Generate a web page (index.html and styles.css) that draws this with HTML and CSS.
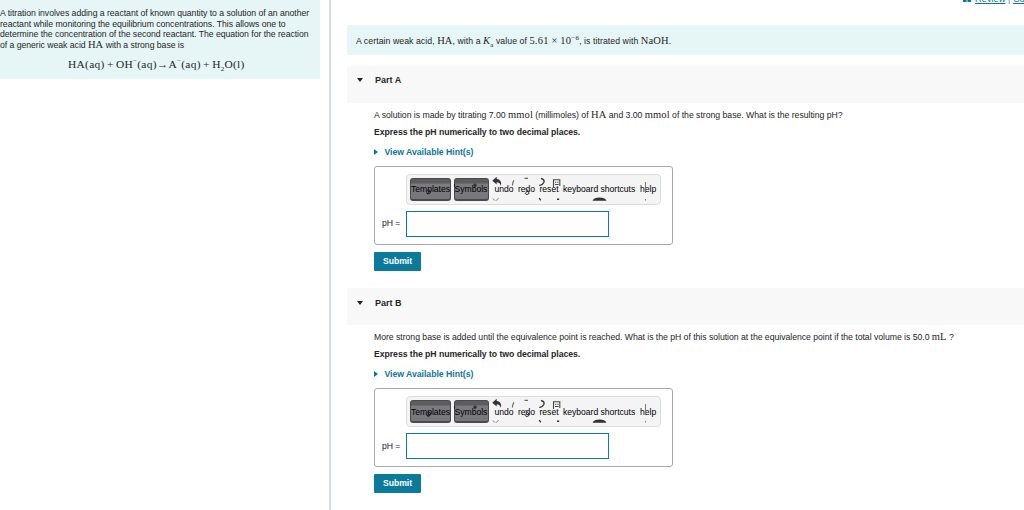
FILE: index.html
```html
<!DOCTYPE html>
<html lang="en">
<head>
    <meta charset="UTF-8">
    <meta name="viewport" content="width=device-width, initial-scale=1.0">
    <title>Acid Titration</title>
    <link rel="stylesheet" href="styles.css">
</head>
<body>
    <!-- toolbar icons, shared by both answer boxes -->
    <svg class="sprite" xmlns="http://www.w3.org/2000/svg">
        <symbol id="toolbar-icons" viewBox="0 0 254 31">
            <path d="M86.3 6.8 L90.7 2.8 V5 Q96 5.3 95 12 Q94 8.5 90.7 8.3 V10.6 Z" fill="#333"/>
            <path d="M108 6.3 Q106.4 8 106.4 11.5 M118.5 4.3 h3.5" fill="none" stroke="#666" stroke-width="1.2"/>
            <path d="M135 4.5 Q139 5.5 137.8 8.5 Q136 11.8 133.3 11.3" fill="none" stroke="#333" stroke-width="1.4"/>
            <path d="M147.5 13 V5.8 H153.8 V12 M149 8.2 h1.3 M151.3 8.2 h1.3 M149 10.5 h3.6" fill="none" stroke="#444" stroke-width="1.1"/>
            <path d="M87 24.5 l1.7 2 M90 26.7 l2.5 -2.5" fill="none" stroke="#777" stroke-width="1"/>
            <path d="M133.3 24 l1.4 2.4 M151 25.3 h2.2" fill="none" stroke="#333" stroke-width="1.4"/>
            <path d="M186.5 26.7 Q188 23.4 193.5 23.4 Q199 23.4 200.5 26.7 Z" fill="#333"/>
            <path d="M239.5 8 V19 M239.5 25 v1.5" fill="none" stroke="#777" stroke-width="1"/>
            <path d="M21 16.5 Q24.8 15.5 24.5 18.3 Q22 21.3 20.5 18.5 M48.5 10 v2.5" fill="none" stroke="#222" stroke-width="1.1"/>
            <circle cx="69" cy="11.3" r="1.7" fill="#333"/>
            <path d="M119.5 14 l3.5 4 M121 17.5 q-3.5 2.5 0 3 q3.2 -.5 1.5 -3" fill="none" stroke="#333" stroke-width="1"/>
        </symbol>
    </svg>

    <div class="page">
        <aside class="sidebar">
            <div class="intro">
                <p class="line">A titration involves adding a reactant of known quantity to a solution of an another</p>
                <p class="line">reactant while monitoring the equilibrium concentrations. This allows one to</p>
                <p class="line">determine the concentration of the second reactant. The equation for the reaction</p>
                <p class="line">of a generic weak acid <span class="math">HA</span> with a strong base is</p>
                <p class="equation">HA(aq)<span class="op">+</span>OH<sup>−</sup>(aq)<span class="arrow">→</span>A<sup>−</sup>(aq)<span class="op">+</span>H<sub>2</sub>O(l)</p>
            </div>
        </aside>

        <main class="content">
            <div class="top-links">
                <svg class="book" width="8" height="8" viewBox="0 0 8 8"><path d="M0 0h3.6v8H0zM4.4 0H8v8H4.4z" fill="#0b7796"/></svg>
                <a href="#">Review</a><span>|</span><a href="#">Constants</a>
            </div>

            <div class="problem">A certain weak acid, <span class="math">HA</span>, with a <span class="math"><i>K</i><sub>a</sub></span> value of <span class="math number">5.61 × 10<sup>−6</sup></span>, is titrated with <span class="math">NaOH</span>.</div>

            <section class="part part-a">
                <div class="part-header"><span class="caret"></span><h2>Part A</h2></div>
                <div class="part-body">
                    <p class="question question-a">A solution is made by titrating 7.00 <span class="math">mmol</span> (millimoles) of <span class="math">HA</span> and 3.00 <span class="math">mmol</span> of the strong base. What is the resulting pH?</p>
                    <p class="instruction">Express the pH numerically to two decimal places.</p>
                    <a class="hints" href="#"><span class="hint-arrow"></span>View Available Hint(s)</a>
                    <div class="answer">
                        <div class="toolbar">
                            <span class="tool dark templates">Templates</span>
                            <span class="tool dark symbols">Symbols</span>
                            <span class="tool undo">undo</span>
                            <span class="tool redo">redo</span>
                            <span class="tool reset">reset</span>
                            <span class="tool keyboard">keyboard shortcuts</span>
                            <span class="tool help">help</span>
                            <svg class="icons"><use href="#toolbar-icons"/></svg>
                        </div>
                        <div class="field"><label for="ph-a">pH =</label><input id="ph-a" type="text"></div>
                    </div>
                    <button class="submit">Submit</button>
                </div>
            </section>

            <section class="part part-b">
                <div class="part-header"><span class="caret"></span><h2>Part B</h2></div>
                <div class="part-body">
                    <p class="question question-b">More strong base is added until the equivalence point is reached. What is the pH of this solution at the equivalence point if the total volume is 50.0 <span class="math">mL</span> ?</p>
                    <p class="instruction">Express the pH numerically to two decimal places.</p>
                    <a class="hints" href="#"><span class="hint-arrow"></span>View Available Hint(s)</a>
                    <div class="answer">
                        <div class="toolbar">
                            <span class="tool dark templates">Templates</span>
                            <span class="tool dark symbols">Symbols</span>
                            <span class="tool undo">undo</span>
                            <span class="tool redo">redo</span>
                            <span class="tool reset">reset</span>
                            <span class="tool keyboard">keyboard shortcuts</span>
                            <span class="tool help">help</span>
                            <svg class="icons"><use href="#toolbar-icons"/></svg>
                        </div>
                        <div class="field"><label for="ph-b">pH =</label><input id="ph-b" type="text"></div>
                    </div>
                    <button class="submit">Submit</button>
                </div>
            </section>
        </main>
    </div>
</body>
</html>
```
FILE: styles.css
```css
* {
    box-sizing: border-box;
}

body {
    margin: 0;
    height: 510px;
    overflow: hidden;
    background-color: #fff;
    color: #252525;
    font-family: "Liberation Sans", Arial, sans-serif;
    font-size: 8.7px;
    white-space: nowrap;
}

p, h2 {
    margin: 0;
}

.sprite {
    display: none;
}

.page {
    display: flex;
    height: 510px;
}

.sidebar {
    width: 331px;
    flex: none;
    border-right: 2px solid #d5dbe6;
}

.intro {
    width: 320px;
    height: 79px;
    padding-top: 8px;
    background-color: #e6f6f6;
}

.line {
    height: 10.5px;
    line-height: 10.5px;
    letter-spacing: -0.04px;
}

.math, .equation {
    font-family: "Liberation Serif", "Times New Roman", serif;
    font-size: 10.5px;
    line-height: 1px;
    letter-spacing: 0.1px;
}

sup, sub {
    font-size: 7px;
    line-height: 0;
}

.equation {
    padding: 8.5px 0 0 68px;
    font-size: 11.4px;
    line-height: 10px;
    letter-spacing: 0.3px;
}

.equation .op {
    margin: 0 2.3px;
}

.content {
    flex: 1;
    min-width: 0;
    padding-left: 16px;
    overflow: hidden;
}

.top-links {
    display: flex;
    height: 25px;
    padding-left: 616px;
    margin-top: -6px;
    margin-bottom: 6px;
    font-size: 9.3px;
    line-height: 10px;
    gap: 2.5px;
    color: #777;
}

.top-links a {
    color: #0b7796;
}

.book {
    flex: none;
    margin-right: 1.5px;
}

.problem {
    height: 30px;
    padding-left: 9px;
    line-height: 32px;
    background-color: #e6f6f6;
    letter-spacing: 0.07px;
}

.problem .number {
    letter-spacing: 0.2px;
}

.part {
    height: 222px;
}

.part-a {
    margin-top: 11px;
}

.part-header {
    display: flex;
    height: 37px;
    padding: 9px 0 0 10px;
    background-color: #f8f8f8;
}

.caret {
    width: 6px;
    height: 4px;
    margin: 3px 12px 0 0;
    border-left: 3.5px solid transparent;
    border-right: 3.5px solid transparent;
    border-top: 4px solid #222;
}

h2 {
    font-size: 9px;
    line-height: 10px;
}

.part-b h2 {
    padding-top: 1px;
}

.part-b .caret {
    margin-top: 4px;
}

.part-body {
    padding: 6px 0 0 27px;
}

.question, .instruction {
    height: 17px;
    line-height: 12px;
}

.question {
    letter-spacing: -0.02px;
}

.question-b {
    letter-spacing: -0.035px;
}

.instruction {
    font-weight: bold;
    letter-spacing: -0.05px;
}

.hints {
    display: flex;
    align-items: center;
    height: 12px;
    margin-top: 3px;
    color: #0b7796;
    font-weight: bold;
    letter-spacing: -0.03px;
    text-decoration: none;
}

.hint-arrow {
    margin-right: 6.5px;
    border-top: 3.5px solid transparent;
    border-bottom: 3.5px solid transparent;
    border-left: 4px solid #0b7796;
}

.answer {
    width: 299px;
    height: 79px;
    margin-top: 8px;
    padding: 7px 0 0 7px;
    border: 1px solid #a8a8a8;
    border-radius: 3px;
}

.toolbar {
    position: relative;
    display: flex;
    width: 255px;
    height: 31px;
    margin-left: 24px;
    padding: 3px;
    border: 1px solid #ddd;
    border-radius: 4px;
    background-color: #f4f4f4;
    color: #000;
    font-size: 8.6px;
    letter-spacing: -0.02px;
    line-height: 23px;
}

.part-b .toolbar {
    line-height: 24px;
}

.tool {
    flex: none;
}

.dark {
    height: 23px;
    border: 1px solid #4a4a4c;
    border-bottom-width: 2px;
    border-radius: 3px;
    background: linear-gradient(#5d5d60 4px, #7b7b80 5px, #77777b);
    line-height: 21px;
}

.part-b .dark {
    line-height: 22px;
}

.templates {
    width: 41px;
    margin-right: 2.5px;
}

.symbols {
    width: 35px;
    margin-right: 6px;
}

.undo {
    width: 23.5px;
}

.redo {
    width: 21.5px;
}

.reset {
    width: 23.5px;
}

.keyboard {
    width: 77px;
}

.icons {
    position: absolute;
    left: -1px;
    top: -1px;
    width: 254px;
    height: 31px;
}

.field {
    display: flex;
    align-items: center;
    margin-top: 6px;
}

.field label {
    width: 24px;
    letter-spacing: -0.1px;
}

.part-a label {
    padding-bottom: 2px;
}

.field input {
    width: 203px;
    height: 26px;
    padding: 0 4px;
    border: 1px solid #0b7f9f;
    background-color: #fff;
}

.submit {
    display: block;
    width: 47px;
    height: 19px;
    margin-top: 7px;
    padding: 0;
    border: none;
    border-radius: 1px;
    background-color: #0b7a9b;
    color: #fff;
    font-family: inherit;
    font-size: 8.6px;
    line-height: 17px;
    font-weight: bold;
}
```
